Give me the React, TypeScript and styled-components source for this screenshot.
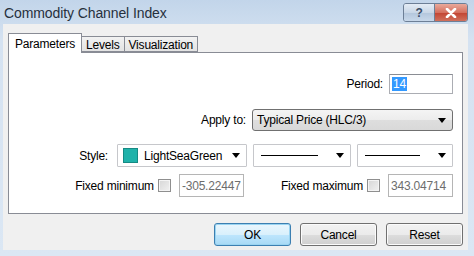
import React from "react";
import styled, { createGlobalStyle } from "styled-components";

const Global = createGlobalStyle`
  html, body { margin: 0; padding: 0; background: #d6e3f1; }
  body { font-family: "Liberation Sans", Arial, sans-serif; font-size: 12px; color: #000; letter-spacing: -0.2px; }
`;

const Window = styled.div`
  width: 474px;
  height: 256px;
  display: flex;
  flex-direction: column;
  background: linear-gradient(#c2d5ea, #d5e2f1 40px, #dbe7f4);
  box-sizing: border-box;
  overflow: hidden;
`;

const TitleBar = styled.div`
  height: 24px;
  display: flex;
  align-items: center;
  padding-left: 4px;
  padding-right: 6px;
  flex-shrink: 0;
`;

const Title = styled.div`
  flex: 1;
  font-size: 14px;
  letter-spacing: -0.1px;
  color: #26303d;
  padding-top: 2px;
`;

const CaptionButtons = styled.div`
  display: flex;
  align-self: flex-start;
  margin-top: 3px;
  border-radius: 3px;
  overflow: hidden;
  border: 1px solid #6d7f96;
`;

const CaptionButton = styled.div<{ $close?: boolean }>`
  width: ${(p) => (p.$close ? 32 : 30)}px;
  height: 17px;
  display: flex;
  align-items: center;
  justify-content: center;
  font-weight: bold;
  font-size: 12px;
  color: ${(p) => (p.$close ? "#fff" : "#3a4d66")};
  background: ${(p) =>
    p.$close
      ? "linear-gradient(#e9a99b, #d5705f 50%, #c24432 51%, #d0705c)"
      : "linear-gradient(#e4ecf5, #c9d7e7 50%, #b3c6dc 51%, #c8d8ea)"};
  & + & { border-left: 1px solid #6d7f96; }
`;

const Client = styled.div`
  flex: 1;
  margin: 0 6px 6px 3px;
  background: #f0f0f0;
  display: flex;
  flex-direction: column;
  padding: 9px 5px 0 5px;
`;

const TabStrip = styled.div`
  display: flex;
  align-items: flex-end;
  height: 19px;
  position: relative;
  z-index: 1;
`;

const Tab = styled.div<{ $active?: boolean }>`
  height: ${(p) => (p.$active ? 20 : 16)}px;
  padding: 0 ${(p) => (p.$active ? 6 : 4)}px;
  display: flex;
  align-items: center;
  box-sizing: border-box;
  border: 1px solid #898c95;
  border-bottom: ${(p) => (p.$active ? "none" : "1px solid #898c95")};
  margin-left: ${(p) => (p.$active ? 0 : -1)}px;
  background: ${(p) => (p.$active ? "#fff" : "linear-gradient(#f2f2f2, #e3e3e3)")};
  font-size: 12px;
  padding-top: ${(p) => (p.$active ? 0 : 2)}px;
  margin-bottom: ${(p) => (p.$active ? -1 : 0)}px;
`;

const Panel = styled.div`
  height: 162px;
  border: 1px solid #898c95;
  background: #fff;
  box-sizing: border-box;
  padding: 21px 9px 0 9px;
  display: flex;
  flex-direction: column;
`;

const Row = styled.div<{ $mt?: number }>`
  display: flex;
  align-items: center;
  justify-content: flex-end;
  margin-top: ${(p) => p.$mt ?? 0}px;
`;

const Label = styled.span<{ $gap?: number }>`
  margin-right: ${(p) => p.$gap ?? 6}px;
  white-space: nowrap;
`;

const TextBox = styled.div<{ $w: number; $disabled?: boolean }>`
  width: ${(p) => p.$w}px;
  height: ${(p) => (p.$disabled ? 23 : 20)}px;
  box-sizing: border-box;
  border: 1px solid ${(p) => (p.$disabled ? "#b5b5b5" : "#abadb3")};
  border-top-color: ${(p) => (p.$disabled ? "#b5b5b5" : "#8a8d94")};
  background: #fff;
  display: flex;
  align-items: center;
  padding-left: 2px;
  color: ${(p) => (p.$disabled ? "#6d6d6d" : "#000")};
  font-size: 12px;
`;

const Selected = styled.span`
  background: #3399ff;
  color: #fff;
  padding: 0 1px;
  line-height: 14px;
`;

const Combo = styled.div<{ $w: number; $flat?: boolean }>`
  width: ${(p) => p.$w}px;
  height: ${(p) => (p.$flat ? 23 : 22)}px;
  box-sizing: border-box;
  border: 1px solid ${(p) => (p.$flat ? "#c6c7cb" : "#707070")};
  border-radius: ${(p) => (p.$flat ? 1 : 3)}px;
  background: ${(p) => (p.$flat ? "#fff" : "linear-gradient(#f4f4f4, #ececec 50%, #dedede 51%, #d9d9d9)")};
  display: flex;
  align-items: center;
  padding: 0 6px 0 4px;
  gap: 6px;
  & + & { margin-left: 6px; }
`;

const ComboText = styled.span`
  flex: 1;
  white-space: nowrap;
`;

const Arrow = styled.span`
  width: 0;
  height: 0;
  border-left: 4px solid transparent;
  border-right: 4px solid transparent;
  border-top: 5px solid #000;
`;

const Swatch = styled.span`
  width: 13px;
  height: 13px;
  background: #20b2aa;
  border: 1px solid #168a84;
  margin-left: 1px;
`;

const LineSample = styled.span`
  flex: 1;
  height: 1px;
  background: #000;
  margin: 0 12px 0 3px;
`;

const Check = styled.span`
  width: 11px;
  height: 11px;
  border: 1px solid #8f8f8f;
  background: linear-gradient(135deg, #d6d6d6, #f1f1f1);
  margin-right: 8px;
  box-shadow: inset 0 0 0 1px #f4f4f4;
`;

const Group = styled.div<{ $ml?: number }>`
  display: flex;
  align-items: center;
  margin-left: ${(p) => p.$ml ?? 0}px;
`;

const Footer = styled.div`
  display: flex;
  justify-content: flex-end;
  gap: 9px;
  margin-top: 9px;
  padding-right: 0;
`;

const Button = styled.div<{ $default?: boolean }>`
  width: 77px;
  height: 23px;
  box-sizing: border-box;
  border-radius: 3px;
  border: 1px solid ${(p) => (p.$default ? "#3c7fb1" : "#707070")};
  background: ${(p) =>
    p.$default
      ? "linear-gradient(#eaf6fd, #d9f0fc 50%, #bee6fd 51%, #a7d9f5)"
      : "linear-gradient(#f2f2f2, #ebebeb 50%, #dddddd 51%, #cfcfcf)"};
  box-shadow: inset 0 0 0 1px ${(p) => (p.$default ? "#9ad4f1" : "#fbfbfb")};
  display: flex;
  align-items: center;
  justify-content: center;
  font-size: 12px;
`;

export default function App() {
  return (
    <>
      <Global />
      <Window>
        <TitleBar>
          <Title>Commodity Channel Index</Title>
          <CaptionButtons>
            <CaptionButton>?</CaptionButton>
            <CaptionButton $close>
              <svg width="12" height="10" viewBox="0 0 12 10">
                <path d="M2 1 L10 9 M10 1 L2 9" stroke="#fff" strokeWidth="2.6" strokeLinecap="round" />
              </svg>
            </CaptionButton>
          </CaptionButtons>
        </TitleBar>
        <Client>
          <TabStrip>
            <Tab $active>Parameters</Tab>
            <Tab>Levels</Tab>
            <Tab>Visualization</Tab>
          </TabStrip>
          <Panel>
            <Row>
              <Label>Period:</Label>
              <TextBox $w={64}>
                <Selected>14</Selected>
              </TextBox>
            </Row>
            <Row $mt={15}>
              <Label>Apply to:</Label>
              <Combo $w={201}>
                <ComboText>Typical Price (HLC/3)</ComboText>
                <Arrow />
              </Combo>
            </Row>
            <Row $mt={13}>
              <Label $gap={9}>Style:</Label>
              <Combo $w={130} $flat>
                <Swatch />
                <ComboText>LightSeaGreen</ComboText>
                <Arrow />
              </Combo>
              <Combo $w={98} $flat>
                <LineSample />
                <Arrow />
              </Combo>
              <Combo $w={96} $flat>
                <LineSample />
                <Arrow />
              </Combo>
            </Row>
            <Row $mt={7}>
              <Group>
                <Label $gap={4}>Fixed minimum</Label>
                <Check />
                <TextBox $w={65} $disabled>-305.22447</TextBox>
              </Group>
              <Group $ml={37}>
                <Label $gap={4}>Fixed maximum</Label>
                <Check />
                <TextBox $w={65} $disabled>343.04714</TextBox>
              </Group>
            </Row>
          </Panel>
          <Footer>
            <Button $default>OK</Button>
            <Button>Cancel</Button>
            <Button>Reset</Button>
          </Footer>
        </Client>
      </Window>
    </>
  );
}
